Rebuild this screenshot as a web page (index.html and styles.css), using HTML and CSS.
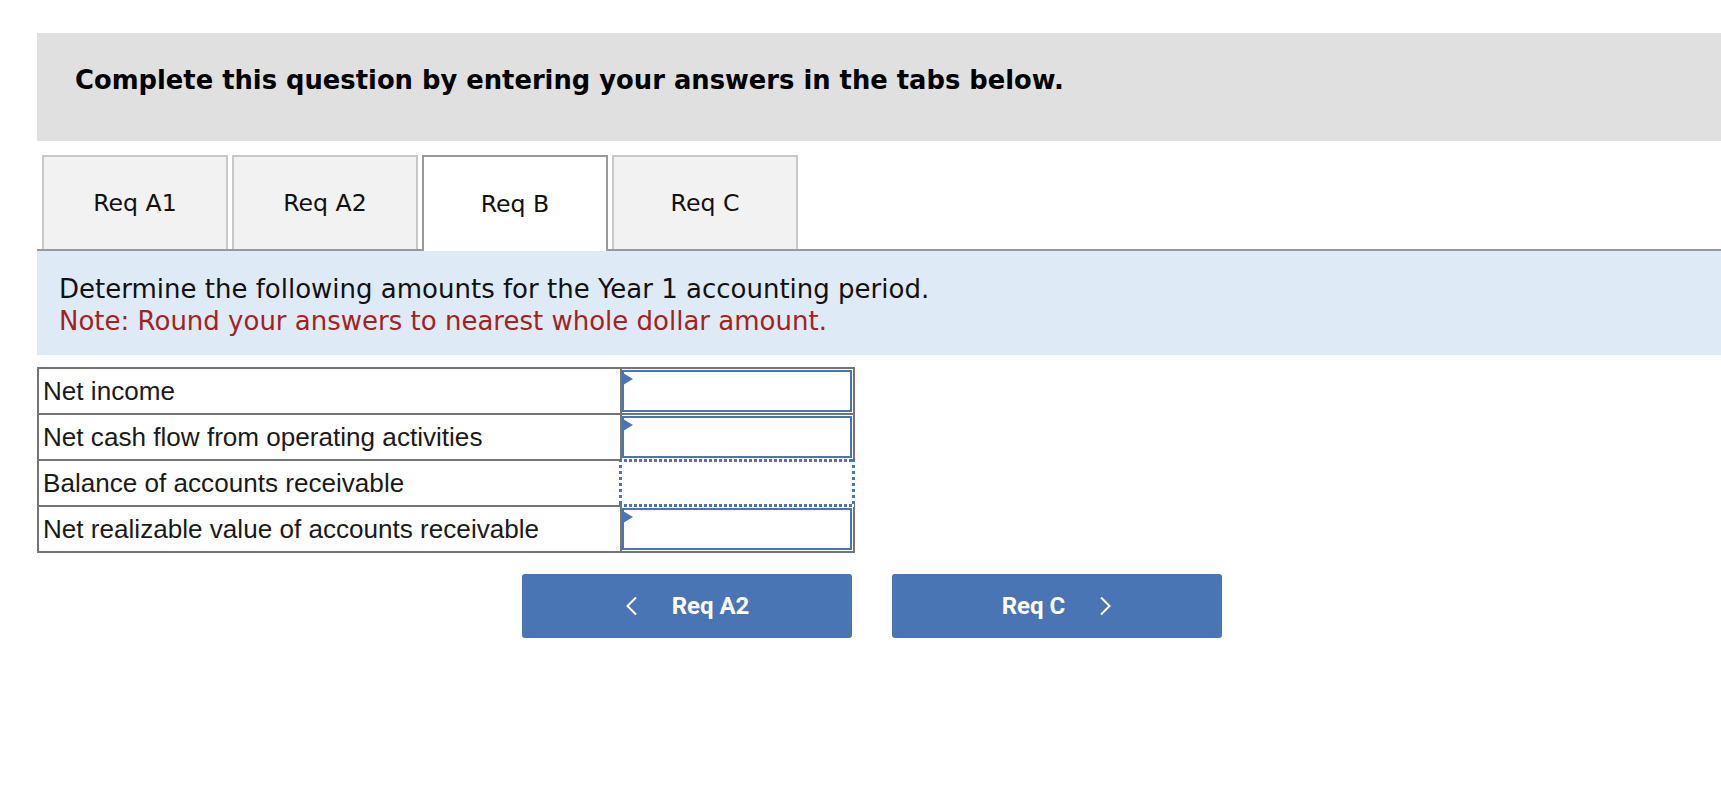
FILE: index.html
```html
<!DOCTYPE html>
<html lang="en">
<head>
<meta charset="utf-8">
<title>Req B</title>
<link rel="stylesheet" href="styles.css">
</head>
<body>
<div class="page">
  <div class="banner">
    <h1 class="banner-title">Complete this question by entering your answers in the tabs below.</h1>
  </div>

  <div class="tabs">
    <div class="tab">Req A1</div>
    <div class="tab">Req A2</div>
    <div class="tab tab-active">Req B</div>
    <div class="tab">Req C</div>
  </div>

  <div class="prompt">
    <p class="prompt-line">Determine the following amounts for the Year 1 accounting period.</p>
    <p class="prompt-line prompt-note">Note: Round your answers to nearest whole dollar amount.</p>
  </div>

  <table class="answers">
    <tr>
      <td class="label">Net income</td>
      <td class="cell"><div class="input"><span class="flag"></span></div></td>
    </tr>
    <tr>
      <td class="label">Net cash flow from operating activities</td>
      <td class="cell"><div class="input"><span class="flag"></span></div></td>
    </tr>
    <tr>
      <td class="label">Balance of accounts receivable</td>
      <td class="cell"><div class="input input-focus"></div></td>
    </tr>
    <tr>
      <td class="label">Net realizable value of accounts receivable</td>
      <td class="cell"><div class="input"><span class="flag"></span></div></td>
    </tr>
  </table>

  <div class="nav">
    <button class="nav-btn">
      <svg class="chev" width="13" height="20" viewBox="0 0 13 20"><polyline points="11,1.5 2.5,10 11,18.5" fill="none" stroke="#fff" stroke-width="2"/></svg>
      <span class="nav-text">Req A2</span>
    </button>
    <button class="nav-btn">
      <span class="nav-text">Req C</span>
      <svg class="chev" width="13" height="20" viewBox="0 0 13 20"><polyline points="2,1.5 10.5,10 2,18.5" fill="none" stroke="#fff" stroke-width="2"/></svg>
    </button>
  </div>
</div>
</body>
</html>
```

FILE: styles.css
```css
html, body {
  margin: 0;
  padding: 0;
  background: #fff;
}

.page {
  padding: 33px 0 0 37px;
}

.banner {
  background: #e0e0e0;
  height: 108px;
  display: flex;
  align-items: center;
  padding-left: 38px;
}

.banner-title {
  margin: 0;
  font-family: "DejaVu Sans", Verdana, sans-serif;
  font-weight: bold;
  font-size: 25.8px;
  color: #000;
  position: relative;
  top: -7px;
}

.tabs {
  display: flex;
  gap: 4px;
  margin-top: 14px;
  padding-left: 5px;
  border-bottom: 2px solid #999;
  height: 94px;
}

.tab {
  width: 182px;
  height: 92px;
  background: #f2f2f2;
  border: 2px solid #c8c8c8;
  border-bottom: none;
  display: flex;
  align-items: center;
  justify-content: center;
  font-family: "DejaVu Sans", Verdana, sans-serif;
  font-size: 23.6px;
  color: #111;
}

.tab-active {
  background: #fff;
  border-color: #999;
  height: 94px;
  margin-bottom: -2px;
  position: relative;
}

.prompt {
  background: #deebf7;
  height: 104px;
  box-sizing: border-box;
  padding: 22px 0 0 22px;
  font-family: "DejaVu Sans", Verdana, sans-serif;
  font-size: 26px;
}

.prompt-line {
  margin: 0;
  line-height: 32px;
  color: #111;
}

.prompt-note {
  color: #a4211e;
}

.answers {
  margin-top: 12px;
  width: 810px;
  table-layout: fixed;
  border-collapse: collapse;
  border: 2px solid #757575;
  font-family: "Liberation Sans", Arial, sans-serif;
  font-size: 26.1px;
  color: #1a1a1a;
}

.answers td {
  border: 2px solid #757575;
  height: 44px;
  padding: 0;
}

.label {
  width: 577px;
  padding-left: 4px !important;
  white-space: nowrap;
}

.cell {
  width: 231px;
}

.input {
  position: relative;
  z-index: 1;
  height: 42px;
  margin: 1px 1px 1px 0;
  border: 2px solid #4a74b5;
  box-sizing: border-box;
  background: #fff;
}

.input-focus {
  height: 48px;
  margin: -2px -2px -2px -3px;
  border: none;
  z-index: 2;
  background:
    repeating-linear-gradient(90deg, #4a74b5 0 3px, transparent 3px 5px) left top / 100% 3px no-repeat,
    repeating-linear-gradient(90deg, #4a74b5 0 3px, transparent 3px 5px) left bottom / 100% 3px no-repeat,
    repeating-linear-gradient(180deg, #4a74b5 0 3px, transparent 3px 6px) left top / 3px 100% no-repeat,
    repeating-linear-gradient(180deg, #4a74b5 0 3px, transparent 3px 6px) right top / 3px 100% no-repeat,
    #fff;
}

.flag {
  position: absolute;
  left: -1px;
  top: 1px;
  width: 0;
  height: 0;
  border-left: 10px solid #4a74b5;
  border-top: 6px solid transparent;
  border-bottom: 6px solid transparent;
}

.nav {
  display: flex;
  gap: 40px;
  margin-top: 21px;
  margin-left: 485px;
}

.nav-btn {
  width: 330px;
  height: 64px;
  border: none;
  border-radius: 3px;
  background: #4a75b5;
  color: #fff;
  display: flex;
  align-items: center;
  justify-content: center;
  gap: 34px;
  font-family: Roboto, "Liberation Sans", sans-serif;
  font-weight: bold;
  font-size: 24px;
  padding: 0;
}

.chev {
  display: block;
}
```
